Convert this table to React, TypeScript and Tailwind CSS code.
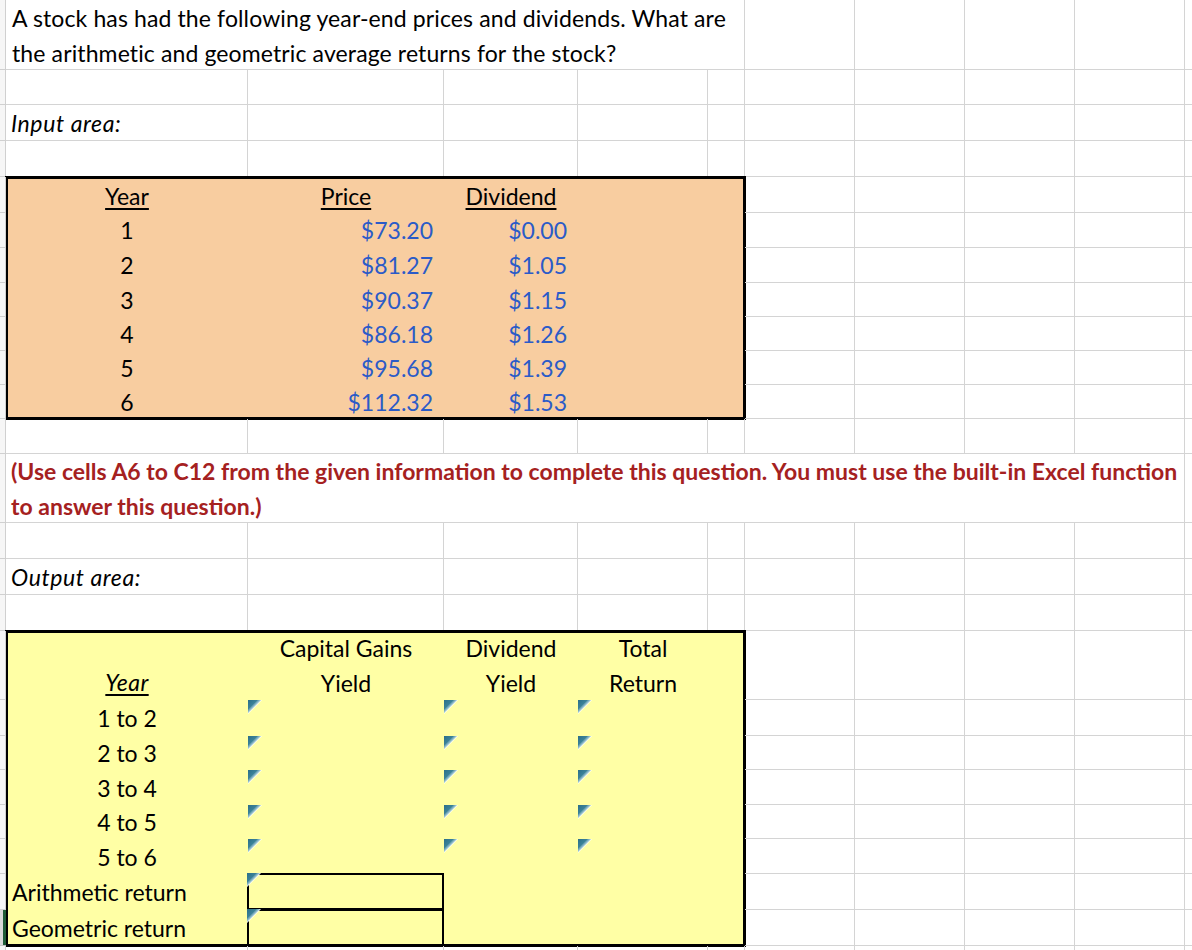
import React from 'react';

// Excel-like sheet: gutter + columns A..J, fixed track sizes taken from the screenshot
const line = 'border-r border-b border-[#d4d4d4]';

function Blank() {
  return <div className={line} />;
}

function blanks(n: number, key: string) {
  return Array.from({ length: n }, (_, i) => <Blank key={key + i} />);
}

function Gutter({ selected }: { selected?: boolean }) {
  if (selected) {
    return (
      <div className="flex justify-end border-b border-[#c4c4c4] bg-[#d9d9d9]">
        <div className="w-[3px] bg-[#1f5c36]" />
      </div>
    );
  }
  return <div className="border-r border-b border-[#d0d0d0] bg-[#f6f6f6]" />;
}

// little teal "error indicator" triangle in the top-left corner of a cell
function Flag({ className = '' }: { className?: string }) {
  return (
    <svg className={'absolute ' + className} width="14" height="14" viewBox="0 0 14 14">
      <defs>
        <linearGradient id="flagFill" x1="0" y1="0" x2="1" y2="1">
          <stop offset="0" stopColor="#2b6f88" />
          <stop offset="0.32" stopColor="#3a8198" />
          <stop offset="0.44" stopColor="#9cc4d0" />
          <stop offset="0.5" stopColor="#ffffff" />
        </linearGradient>
      </defs>
      <polygon points="0,0 14,0 0,14" fill="url(#flagFill)" />
    </svg>
  );
}

const prices = [
  { year: 1, price: '$73.20', div: '$0.00' },
  { year: 2, price: '$81.27', div: '$1.05' },
  { year: 3, price: '$90.37', div: '$1.15' },
  { year: 4, price: '$86.18', div: '$1.26' },
  { year: 5, price: '$95.68', div: '$1.39' },
  { year: 6, price: '$112.32', div: '$1.53' },
];

const periods = ['1 to 2', '2 to 3', '3 to 4', '4 to 5', '5 to 6'];

function InputTable() {
  return (
    <div className="col-start-2 col-span-5 row-start-5 row-span-7 grid grid-cols-[242px_196px_134px_130px_37px] grid-rows-[36px_35px_35px_34px_34px_34px_34px] bg-[#f8cda0] outline-[3px] outline-black outline-offset-[-2px]">
      <div className="flex items-center justify-center pt-[2px]">
        <span className="underline decoration-[1.5px] underline-offset-[3px]">Year</span>
      </div>
      <div className="flex items-center justify-center pt-[2px]">
        <span className="underline decoration-[1.5px] underline-offset-[3px]">Price</span>
      </div>
      <div className="flex items-center justify-center pt-[2px]">
        <span className="underline decoration-[1.5px] underline-offset-[3px]">Dividend</span>
      </div>
      <div />
      <div />
      {prices.map((p) => (
        <React.Fragment key={p.year}>
          <div className="flex items-center justify-center">{p.year}</div>
          <div className="flex items-center justify-end pr-[11px] text-[#2b5bc8]">{p.price}</div>
          <div className="flex items-center justify-end pr-[11px] text-[#2b5bc8]">{p.div}</div>
          <div />
          <div />
        </React.Fragment>
      ))}
    </div>
  );
}

function OutputTable() {
  return (
    <div className="col-start-2 col-span-5 row-start-17 row-span-8 grid grid-cols-[242px_196px_134px_130px_37px] grid-rows-[69px_36px_34px_35px_34px_35px_36px_36px] bg-[#ffffa5] outline-[3px] outline-black outline-offset-[-2px]">
      {/* header */}
      <div className="flex flex-col items-center justify-center pt-[1px]">
        <span className="h-[35px]" />
        <span className="italic tracking-[0.4px] underline decoration-[1.5px] underline-offset-[3px]">Year</span>
      </div>
      <div className="flex flex-col items-center justify-center pt-[1px]">
        <span>Capital Gains</span>
        <span>Yield</span>
      </div>
      <div className="flex flex-col items-center justify-center pt-[1px]">
        <span>Dividend</span>
        <span>Yield</span>
      </div>
      <div className="flex flex-col items-center justify-center pt-[1px]">
        <span>Total</span>
        <span>Return</span>
      </div>
      <div />

      {periods.map((label) => (
        <React.Fragment key={label}>
          <div className="flex items-center justify-center pt-[1px]">{label}</div>
          <div className="relative">
            <Flag className="left-0 top-0" />
          </div>
          <div className="relative">
            <Flag className="left-0 top-0" />
          </div>
          <div className="relative">
            <Flag className="left-0 top-0" />
          </div>
          <div />
        </React.Fragment>
      ))}

      <div className="flex items-center pl-[6px] pt-[1px] whitespace-nowrap">Arithmetic return</div>
      <div className="relative -ml-px -mt-px border-2 border-black">
        <Flag className="-left-[2px] -top-[2px]" />
      </div>
      <div />
      <div />
      <div />

      <div className="flex items-center pl-[6px] pt-[1px] whitespace-nowrap">Geometric return</div>
      <div className="relative -ml-px -mt-px border-2 border-black">
        <Flag className="-left-[2px] -top-[2px]" />
      </div>
      <div />
      <div />
      <div />
    </div>
  );
}

export default function App() {
  return (
    <div className="h-[950px] w-[1192px] overflow-hidden bg-white text-[23px] leading-[35px] text-black font-['Lato','Open_Sans',sans-serif]">
      <div className="grid w-max grid-cols-[6px_242px_196px_134px_130px_37px_110px_110px_110px_110px_20px] grid-rows-[70px_35px_36px_36px_36px_35px_35px_34px_34px_34px_34px_35px_69px_36px_36px_36px_69px_36px_34px_35px_34px_35px_36px_36px_20px]">
        {/* row 1: question */}
        <Gutter />
        <div className={'col-span-5 flex flex-col justify-center pl-[6px] pt-[2px] whitespace-nowrap tracking-[0.12px] ' + line}>
          <span>A stock has had the following year-end prices and dividends. What are</span>
          <span>the arithmetic and geometric average returns for the stock?</span>
        </div>
        {blanks(5, 'r1-')}

        {/* row 2 */}
        <Gutter />
        {blanks(10, 'r2-')}

        {/* row 3: input label */}
        <Gutter />
        <div className={'flex items-center pl-[5px] pt-[2px] italic tracking-[0.6px] ' + line}>Input area:</div>
        {blanks(9, 'r3-')}

        {/* row 4 */}
        <Gutter />
        {blanks(10, 'r4-')}

        {/* rows 5-11: input table */}
        <InputTable />
        {[5, 6, 7, 8, 9, 10, 11].map((r) => (
          <React.Fragment key={'in' + r}>
            <Gutter />
            {blanks(5, 'in' + r + '-')}
          </React.Fragment>
        ))}

        {/* row 12 */}
        <Gutter />
        {blanks(10, 'r12-')}

        {/* row 13: instructions */}
        <Gutter />
        <div className={'col-span-9 flex flex-col justify-center pl-[5px] pt-[2px] whitespace-nowrap font-bold text-[#a5211f] ' + line}>
          <span>(Use cells A6 to C12 from the given information to complete this question. You must use the built-in Excel function</span>
          <span>to answer this question.)</span>
        </div>
        <Blank />

        {/* row 14 */}
        <Gutter />
        {blanks(10, 'r14-')}

        {/* row 15: output label */}
        <Gutter />
        <div className={'flex items-center pl-[5px] pt-[2px] italic tracking-[0.6px] ' + line}>Output area:</div>
        {blanks(9, 'r15-')}

        {/* row 16 */}
        <Gutter />
        {blanks(10, 'r16-')}

        {/* rows 17-24: output table */}
        <OutputTable />
        {[17, 18, 19, 20, 21, 22, 23, 24].map((r) => (
          <React.Fragment key={'out' + r}>
            <Gutter selected={r === 24} />
            {blanks(5, 'out' + r + '-')}
          </React.Fragment>
        ))}

        {/* row 25 */}
        <Gutter />
        {blanks(10, 'r25-')}
      </div>
    </div>
  );
}
